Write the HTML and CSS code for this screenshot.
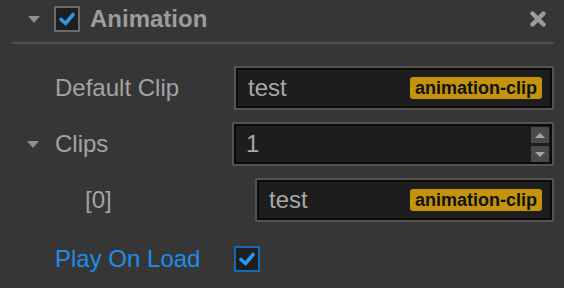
FILE: index.html
```html
<!DOCTYPE html>
<html>
<head>
<meta charset="utf-8">
<link rel="stylesheet" href="styles.css">
</head>
<body>
<div class="panel">
  <div class="header">
    <span class="fold fold-head"></span>
    <span class="check">
      <svg width="22" height="22" viewBox="0 0 22 22"><polyline points="5,11.5 9.5,15.5 17,6.5" fill="none" stroke="#2a97f0" stroke-width="3.6" stroke-linecap="round" stroke-linejoin="round"/></svg>
    </span>
    <span class="title">Animation</span>
    <span class="close">
      <svg width="16" height="16" viewBox="0 0 16 16"><path d="M2.5 2.5 L13.5 13.5 M13.5 2.5 L2.5 13.5" stroke="#9b9b9b" stroke-width="4.4" stroke-linecap="round"/></svg>
    </span>
  </div>
  <div class="props">
    <div class="row">
      <div class="label">Default Clip</div>
      <div class="value">
        <div class="input"><span class="text">test</span><span class="badge">animation-clip</span></div>
      </div>
    </div>
    <div class="row">
      <div class="label label-fold"><span class="fold fold-prop"></span>Clips</div>
      <div class="value">
        <div class="input number"><span class="text">1</span>
          <span class="spin">
            <span class="spin-btn"><span class="tri-up"></span></span>
            <span class="spin-btn"><span class="tri-down"></span></span>
          </span>
        </div>
      </div>
    </div>
    <div class="row">
      <div class="label label-child">[0]</div>
      <div class="value">
        <div class="input"><span class="text">test</span><span class="badge">animation-clip</span></div>
      </div>
    </div>
    <div class="row row-last">
      <div class="label label-blue">Play On Load</div>
      <div class="value">
        <span class="check check-blue">
          <svg width="22" height="22" viewBox="0 0 22 22"><polyline points="5,11.5 9.5,15.5 17,6.5" fill="none" stroke="#2a97f0" stroke-width="3.6" stroke-linecap="round" stroke-linejoin="round"/></svg>
        </span>
      </div>
    </div>
  </div>
</div>
</body>
</html>
```
FILE: styles.css
```css
html, body {
  margin: 0;
  padding: 0;
  background: #363636;
}
body {
  font-family: "Liberation Sans", Arial, sans-serif;
  width: 564px;
  height: 288px;
  overflow: hidden;
}
.panel {
  padding: 0 10px 0 12px;
}
.header {
  height: 38px;
  padding-bottom: 4px;
  display: flex;
  align-items: center;
  border-bottom: 2px solid #4f4f4f;
}
.fold {
  display: inline-block;
  width: 0;
  height: 0;
  border-left: 6px solid transparent;
  border-right: 6px solid transparent;
  border-top: 7px solid #8e8e8e;
}
.fold-head {
  margin-left: 16px;
  margin-right: 14px;
}
.check {
  box-sizing: border-box;
  width: 26px;
  height: 26px;
  border: 2px solid #6b6b6b;
  background: #1e1e1e;
  display: flex;
  align-items: center;
  justify-content: center;
}
.check-blue {
  border-color: #1769b3;
}
.title {
  margin-left: 10px;
  font-size: 24px;
  font-weight: bold;
  color: #9c9c9c;
  flex: 1;
}
.close {
  width: 16px;
  height: 16px;
  margin-right: 8px;
  display: flex;
}
.props {
  padding-top: 22px;
  display: flex;
  flex-direction: column;
  gap: 12px;
}
.row {
  display: flex;
  align-items: center;
  height: 44px;
}
.row-last {
  margin-top: 3px;
}
.label {
  box-sizing: border-box;
  width: 222px;
  padding-left: 43px;
  font-size: 24px;
  color: #a3a3a3;
  display: flex;
  align-items: center;
}
.label-fold {
  width: 220px;
  padding-left: 15px;
}
.fold-prop {
  margin-right: 16px;
}
.label-child {
  width: 243px;
  padding-left: 73px;
}
.label-blue {
  color: #1d8eea;
}
.value {
  flex: 1;
  display: flex;
  align-items: center;
}
.input {
  box-sizing: border-box;
  flex: 1;
  height: 44px;
  border: 2px solid #535353;
  box-shadow: inset 0 0 0 2px #0b0b0b;
  background: #1d1d1d;
  display: flex;
  align-items: center;
  padding: 0 10px 0 12px;
}
.text {
  flex: 1;
  font-size: 24px;
  color: #a8a8a8;
}
.badge {
  height: 22px;
  line-height: 22px;
  padding: 0 5px;
  border-radius: 3px;
  background: #c39409;
  color: #111;
  font-weight: bold;
  font-size: 18px;
}
.number {
  padding-right: 3px;
}
.spin {
  display: flex;
  flex-direction: column;
  gap: 3px;
  padding-top: 1px;
}
.spin-btn {
  width: 18px;
  height: 16px;
  background: #4a4a4a;
  display: flex;
  align-items: center;
  justify-content: center;
}
.tri-up, .tri-down {
  width: 0;
  height: 0;
  border-left: 5px solid transparent;
  border-right: 5px solid transparent;
}
.tri-up {
  border-bottom: 5px solid #a6a6a6;
}
.tri-down {
  border-top: 5px solid #a6a6a6;
}
```
